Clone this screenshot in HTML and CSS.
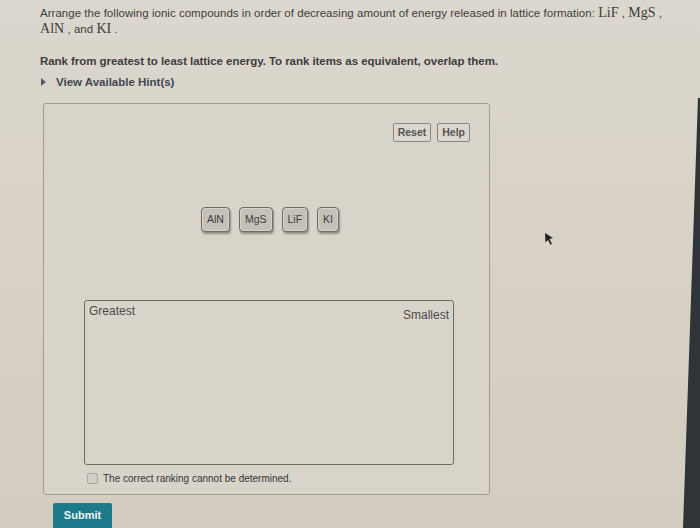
FILE: index.html
```html
<!DOCTYPE html>
<html>
<head>
<meta charset="utf-8">
<link rel="stylesheet" href="styles.css">
</head>
<body>
<div class="page">
  <p class="question">Arrange the following ionic compounds in order of decreasing amount of energy released in lattice formation: <span class="f">LiF</span> , <span class="f">MgS</span> ,<br><span class="f">AlN</span> , and <span class="f">KI</span> .</p>
  <p class="rank">Rank from greatest to least lattice energy. To rank items as equivalent, overlap them.</p>
  <p class="hint"><span class="tri"></span>View Available Hint(s)</p>
  <div class="panel">
    <div class="tools">
      <span class="tbtn">Reset</span>
      <span class="tbtn">Help</span>
    </div>
    <div class="chips">
      <span class="chip">AlN</span>
      <span class="chip">MgS</span>
      <span class="chip">LiF</span>
      <span class="chip">KI</span>
    </div>
    <div class="target">
      <span class="lbl">Greatest</span>
      <span class="lbl lbl-r">Smallest</span>
    </div>
    <label class="check"><span class="box"></span>The correct ranking cannot be determined.</label>
  </div>
  <div class="submit">Submit</div>
</div>
<svg class="cursor" width="12" height="14" viewBox="0 0 12 14"><path d="M1 1 L9 6 L5.5 7 L8 12 L6.5 12.8 L4 8 L1.5 10.5 Z" fill="#222"/></svg>
<svg class="bezel" width="20" height="528" viewBox="0 0 20 528"><polygon points="18,98 20,98 20,528 3,528" fill="#2f3436"/></svg>
</body>
</html>
```
FILE: styles.css
```css
html, body {
  margin: 0;
  padding: 0;
}
body {
  width: 700px;
  height: 528px;
  overflow: hidden;
  background: linear-gradient(180deg, #dcd7ce 0%, #d7d1c6 50%, #d3ccc0 100%);
  font-family: "Liberation Sans", Arial, sans-serif;
  color: #3a3a3a;
  position: relative;
}
.page {
  padding: 5px 0 0 40px;
}
.question {
  margin: 0;
  font-size: 11.5px;
  line-height: 16px;
  color: #3c3c3c;
  letter-spacing: 0.03px;
}
.f {
  font-family: "Liberation Serif", "Times New Roman", serif;
  font-size: 14px;
}
.rank {
  margin: 18px 0 0;
  font-size: 11.5px;
  font-weight: bold;
  color: #3d3d3d;
  letter-spacing: -0.05px;
}
.hint {
  margin: 9px 0 0;
  font-size: 11.5px;
  font-weight: bold;
  color: #3f4850;
  display: flex;
  align-items: center;
}
.tri {
  width: 0;
  height: 0;
  border-left: 5px solid #50606a;
  border-top: 4px solid transparent;
  border-bottom: 4px solid transparent;
  margin: 0 10px 0 1px;
}
.panel {
  margin: 15px 0 0 3px;
  width: 447px;
  height: 392px;
  border: 1px solid #a19c93;
  border-radius: 3px;
  box-sizing: border-box;
  background: #d9d4ca;
  padding: 19px 0 0 40px;
}
.tools {
  display: flex;
  justify-content: flex-end;
  gap: 6px;
  padding-right: 19px;
}
.tbtn {
  font-size: 10.5px;
  font-weight: bold;
  color: #555;
  border: 1px solid #8a867f;
  border-radius: 2px;
  padding: 2px 4px;
  background: #dcd7ce;
  line-height: 13px;
}
.chips {
  display: flex;
  gap: 9px;
  margin: 65px 0 0 117px;
}
.chip {
  font-size: 10.5px;
  color: #3c3c3c;
  background: #c6c1b8;
  border: 1px solid #6f6b66;
  border-radius: 4px;
  padding: 0 5px;
  height: 23px;
  line-height: 23px;
  box-shadow: 1px 2px 2px rgba(60, 55, 50, 0.45), inset 0 0 0 1px #d8d3ca;
}
.target {
  margin: 68px 0 0 0;
  width: 370px;
  height: 165px;
  box-sizing: border-box;
  border: 1px solid #6e6a65;
  border-radius: 3px;
  display: flex;
  justify-content: space-between;
  align-items: flex-start;
  padding: 3px 4px 0 4px;
}
.lbl {
  font-size: 12px;
  color: #4a4a4a;
}
.lbl-r {
  margin-top: 4px;
}
.check {
  display: flex;
  align-items: center;
  margin: 8px 0 0 3px;
  font-size: 10px;
  color: #333;
}
.box {
  width: 9px;
  height: 9px;
  border: 1px solid #aaa59c;
  border-radius: 2px;
  background: #d4cfc6;
  margin-right: 5px;
}
.submit {
  margin: 8px 0 0 13px;
  width: 59px;
  height: 26px;
  line-height: 24px;
  background: #1d7a8b;
  color: #f2f2f2;
  font-weight: bold;
  font-size: 11px;
  text-align: center;
  border-radius: 2px 2px 0 0;
}
.cursor {
  position: absolute;
  left: 544px;
  top: 232px;
}
.bezel {
  position: absolute;
  right: 0;
  top: 0;
}
```
